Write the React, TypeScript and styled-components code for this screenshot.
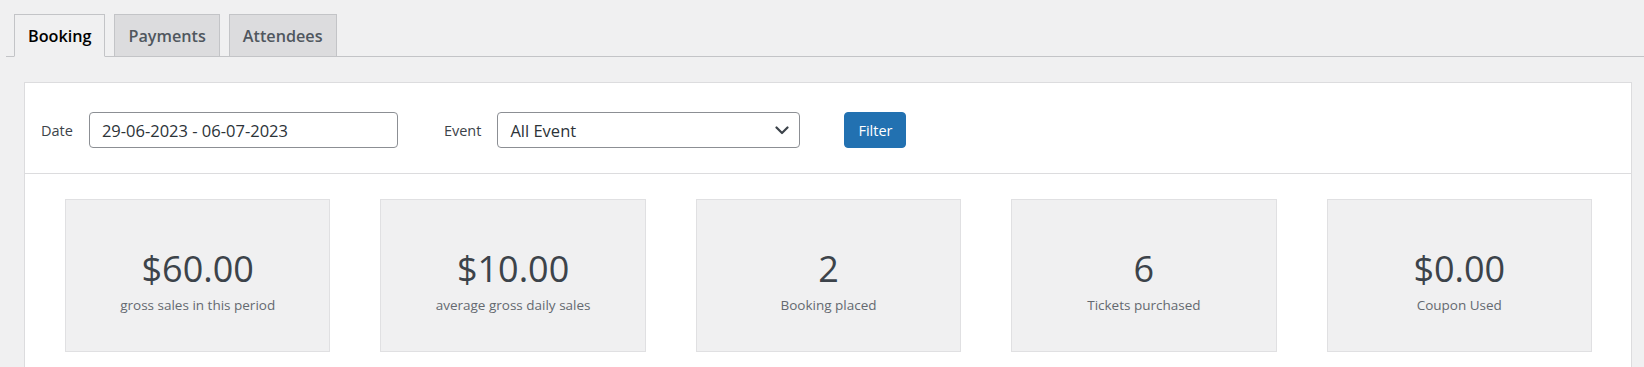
import React from "react";
import styled, { createGlobalStyle } from "styled-components";

const Global = createGlobalStyle`
  html, body { margin: 0; padding: 0; background: #f0f0f1; }
  body { font-family: "Open Sans", "Noto Sans", sans-serif; color: #3c434a; }
  * { box-sizing: border-box; }
`;

const Page = styled.div`
  padding: 14px 12px 0 6px;
  min-height: 367px;
`;

const TabBar = styled.nav`
  display: flex;
  gap: 9px;
  padding-left: 8px;
  border-bottom: 1px solid #c3c4c7;
  margin-right: -12px;
`;

const Tab = styled.button<{ $active?: boolean }>`
  font-family: inherit;
  font-size: 16.2px;
  font-weight: 600;
  height: 43px;
  padding: 0 13px;
  margin-bottom: -1px;
  border: 1px solid #c3c4c7;
  border-bottom-color: ${(p) => (p.$active ? "#f0f0f1" : "#c3c4c7")};
  background: ${(p) => (p.$active ? "#f0f0f1" : "#dcdcde")};
  color: ${(p) => (p.$active ? "#000" : "#50575e")};
  cursor: pointer;
`;

const Panel = styled.section`
  margin: 25px 0 0 18px;
  background: #fff;
  border: 1px solid #dcdcde;
  border-bottom: none;
  min-height: 290px;
`;

const FilterRow = styled.form`
  display: flex;
  align-items: center;
  height: 91px;
  padding: 4px 16px 0;
  border-bottom: 1px solid #dcdcde;
`;

const Field = styled.label`
  display: flex;
  align-items: center;
  gap: 16px;
  margin-right: 46px;
  font-size: 14.5px;
  color: #3c434a;
`;

const TextInput = styled.input<{ $w: number }>`
  width: ${(p) => p.$w}px;
  height: 36px;
  padding: 0 12px;
  font-family: inherit;
  font-size: 16.5px;
  color: #2c3338;
  border: 1px solid #8c8f94;
  border-radius: 4px;
  background: #fff;
  outline: none;
`;

const SelectBox = styled.div<{ $w: number }>`
  width: ${(p) => p.$w}px;
  height: 36px;
  display: flex;
  align-items: center;
  justify-content: space-between;
  padding: 0 10px 0 12px;
  font-size: 16.5px;
  color: #2c3338;
  border: 1px solid #8c8f94;
  border-radius: 4px;
  background: #fff;
`;

const Button = styled.button`
  height: 36px;
  padding: 0 13px;
  margin-left: -2px;
  font-family: inherit;
  font-size: 14.5px;
  color: #fff;
  background: #2271b1;
  border: 1px solid #2271b1;
  border-radius: 4px;
  cursor: pointer;
`;

const Cards = styled.div`
  display: grid;
  grid-template-columns: repeat(5, 1fr);
  column-gap: 50px;
  padding: 25px 39px 0 40px;
`;

const Card = styled.div`
  height: 153px;
  background: #f0f0f1;
  border: 1px solid #e0e0e2;
  display: flex;
  flex-direction: column;
  align-items: center;
  justify-content: center;
  padding-top: 10px;
`;

const Value = styled.div`
  font-size: 36px;
  line-height: 44px;
  color: #3c434a;
`;

const Label = styled.div`
  font-size: 13.5px;
  line-height: 20px;
  margin-top: 4px;
  color: #646970;
`;

const Chevron = () => (
  <svg width="14" height="9" viewBox="0 0 14 9" fill="none">
    <polyline points="1.5,1.5 7,7 12.5,1.5" stroke="#3c434a" strokeWidth="2.2" strokeLinecap="round" strokeLinejoin="round" />
  </svg>
);

const stats = [
  { value: "$60.00", label: "gross sales in this period" },
  { value: "$10.00", label: "average gross daily sales" },
  { value: "2", label: "Booking placed" },
  { value: "6", label: "Tickets purchased" },
  { value: "$0.00", label: "Coupon Used" },
];

export default function App() {
  return (
    <>
      <Global />
      <Page>
        <TabBar>
          <Tab $active>Booking</Tab>
          <Tab>Payments</Tab>
          <Tab>Attendees</Tab>
        </TabBar>
        <Panel>
          <FilterRow onSubmit={(e) => e.preventDefault()}>
            <Field>
              Date
              <TextInput $w={309} defaultValue="29-06-2023 - 06-07-2023" />
            </Field>
            <Field>
              Event
              <SelectBox $w={303}>
                <span>All Event</span>
                <Chevron />
              </SelectBox>
            </Field>
            <Button type="submit">Filter</Button>
          </FilterRow>
          <Cards>
            {stats.map((s) => (
              <Card key={s.label}>
                <Value>{s.value}</Value>
                <Label>{s.label}</Label>
              </Card>
            ))}
          </Cards>
        </Panel>
      </Page>
    </>
  );
}
